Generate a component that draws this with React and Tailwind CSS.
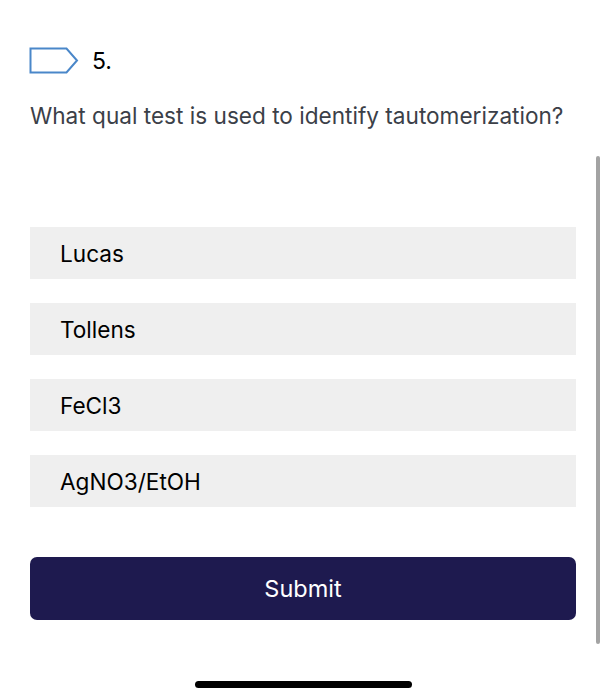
import React from 'react';

const options = ['Lucas', 'Tollens', 'FeCl3', 'AgNO3/EtOH'];

function TagIcon() {
  return (
    <svg width="50" height="28" viewBox="0 0 50 28" className="shrink-0">
      <path d="M1.5 1.5 H37.5 L48 13.5 L37.5 25.5 H1.5 Z" fill="none" stroke="#4a87c9" strokeWidth="2" strokeLinejoin="miter" />
    </svg>
  );
}

export default function App() {
  return (
    <div className="relative w-full h-[700px] bg-white overflow-hidden flex flex-col" style={{ fontFamily: 'Inter, "Noto Sans", sans-serif' }}>
      <div className="flex items-center gap-[13px] pl-[29px] pt-[46px]">
        <TagIcon />
        <span className="text-[23px] leading-[30px] text-black">5.</span>
      </div>

      <p className="mt-[26px] pl-[30px] text-[22.6px] leading-[28px] text-[#3b4048] whitespace-nowrap">
        What qual test is used to identify tautomerization?
      </p>

      <div className="mt-[97px] flex flex-col gap-[24px] pl-[30px] pr-[30px]">
        {options.map((o) => (
          <button key={o} className="h-[52px] bg-[#efefef] text-left pl-[30px] pt-[2px] text-[22.6px] text-black">
            {o}
          </button>
        ))}
      </div>

      <div className="mt-[50px] px-[30px]">
        <button className="w-full h-[63px] rounded-[7px] bg-[#1e1a4f] text-white text-[23.5px]">
          Submit
        </button>
      </div>

      <div className="mt-[61px] flex justify-center">
        <div className="w-[217px] h-[7px] rounded-full bg-black" />
      </div>

      <div className="absolute left-[596px] top-[156px] w-[4px] h-[488px] rounded-full bg-[#a3a3a3]" />
    </div>
  );
}
